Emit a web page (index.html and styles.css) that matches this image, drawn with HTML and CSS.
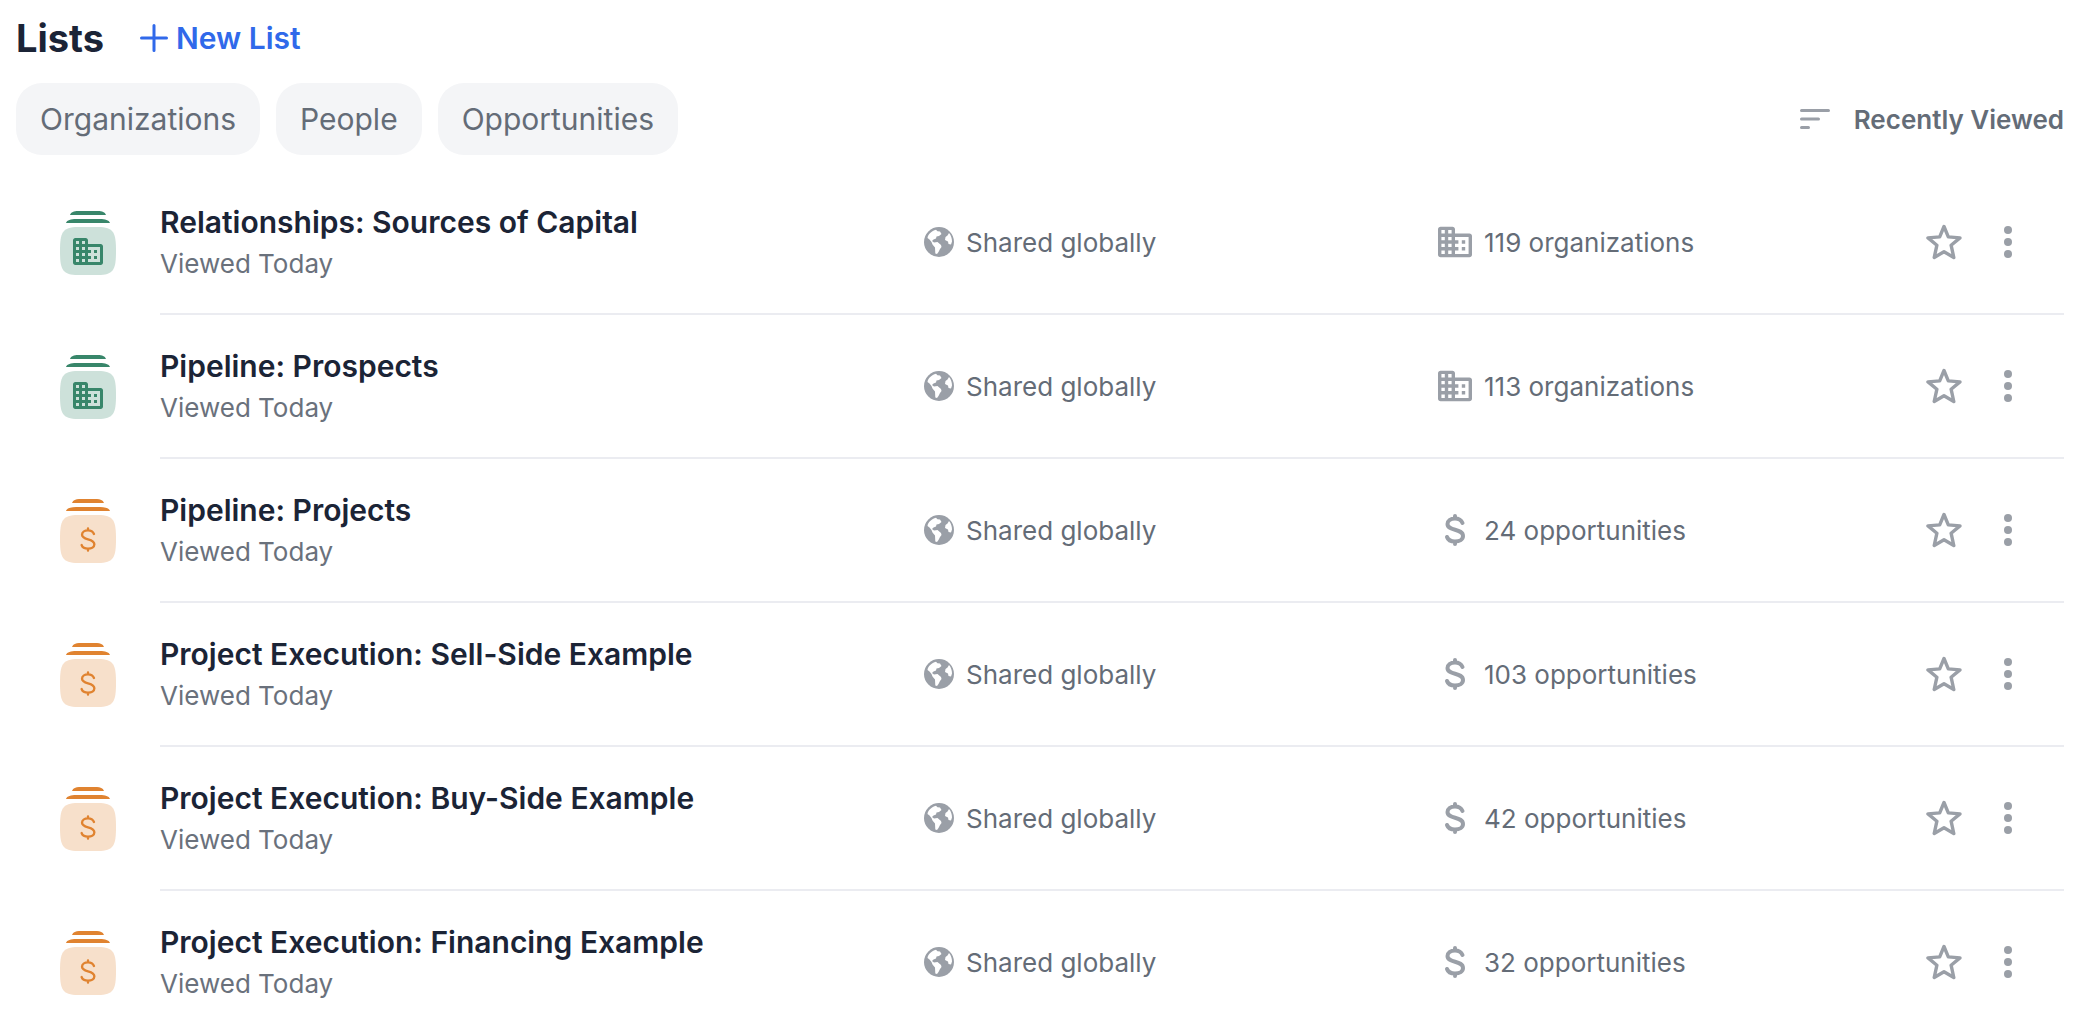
FILE: index.html
```html
<!DOCTYPE html>
<html lang="en">
<head>
<meta charset="utf-8">
<title>Lists</title>
<link rel="stylesheet" href="styles.css">
</head>
<body>
<svg class="sprite" aria-hidden="true">
  <symbol id="building" viewBox="2 3 20 18"><path fill-rule="evenodd" d="M12 7V4.500c0-.8-.7-1.500-1.500-1.500h-7C2.700 3 2 3.700 2 4.500v15c0 .8.7 1.500 1.500 1.500h17c.8 0 1.500-.7 1.500-1.500v-11c0-.8-.7-1.500-1.500-1.500zM6 19H4v-2h2zm0-4H4v-2h2zm0-4H4V9h2zm0-4H4V5h2zm4 12H8v-2h2zm0-4H8v-2h2zm0-4H8V9h2zm0-4H8V5h2zm10 12h-8v-2h2v-2h-2v-2h2v-2h-2V9h8zm-2-8h-2v2h2zm0 4h-2v2h2z"/></symbol>
  <symbol id="globe" viewBox="0 0 30 30"><circle cx="15" cy="15" r="15"/><path fill="#fff" d="M3.500 11C4 7 7.500 4 12 2.700l1.500 1.500 2.500.3 1.500 2.500-2.500 2-2.500.5-.5 2-2.500 1-1.500 1.500 2 1.500 3.500-.5 3.500 3 .5 2-1.500 2-1.500 3-1.500 2-1.700-.5-.3-6-2.500-3-1-2.500-2-2.500z"/><path fill="#fff" d="M25 6c2 2 3 5.500 3 8.500l-1 3-2.500-.5-.5-2.500-3-1.500.5-3 2-1.500z"/></symbol>
  <symbol id="dollar" viewBox="0 0 20 34"><path fill="none" stroke="currentColor" stroke-linecap="round" stroke-linejoin="round" d="M10 3V5.500M10 28.500v2.500M17.500 10C16 6.500 13 5.500 10 5.500c-4.500 0-7.500 2.300-7.500 5.500 0 7.500 15.500 4 15.500 12 0 3.500-3.500 5.500-8 5.500-4 0-7-1.500-8-4.500"/></symbol>
  <symbol id="star" viewBox="0 0 36 36"><path fill="none" stroke="currentColor" stroke-width="3.400" stroke-linejoin="round" d="M18 2.500l4.300 10.400 11.700 1-8.900 7.300 2.700 12.300L18 27.700l-9.800 5.800 2.700-12.300L2 13.900l11.700-1z"/></symbol>
  <symbol id="dots" viewBox="0 0 8 32"><circle cx="4" cy="4" r="4"/><circle cx="4" cy="16" r="4"/><circle cx="4" cy="28" r="4"/></symbol>
  <symbol id="stack-org" viewBox="0 0 56 64"><path d="M10 4c1-3 4-4 8-4h20c4 0 7 1 8 4zM6 12c1-3 5-4 10-4h24c5 0 9 1 10 4z"/><path opacity=".25" d="M0 40C0 22 2 16 18 16h20c16 0 18 6 18 24s-2 24-18 24H18C2 64 0 58 0 40z"/></symbol>
  <symbol id="stack-opp" viewBox="0 0 56 64"><path d="M12 4c1-3 4-4 7-4h18c3 0 6 1 7 4zM6 12c1-3 5-4 10-4h24c5 0 9 1 10 4z"/><path opacity=".25" d="M0 40C0 22 2 16 18 16h20c16 0 18 6 18 24s-2 24-18 24H18C2 64 0 58 0 40z"/></symbol>
</svg>

<main class="page">
  <header class="head">
    <h1 class="title">Lists</h1>
    <button class="new-list" type="button"><svg class="plus" viewBox="0 0 28 28" aria-hidden="true"><path d="M14 1.500v25M1.500 14h25"/></svg>New List</button>
  </header>

  <div class="toolbar">
    <div class="chips">
      <button class="chip" type="button">Organizations</button>
      <button class="chip" type="button">People</button>
      <button class="chip" type="button">Opportunities</button>
    </div>
    <button class="sort" type="button"><svg class="sort-icon" viewBox="0 0 30 20" aria-hidden="true"><path d="M1.500 1.500h27M1.500 10h17M1.500 18.500h7"/></svg>Recently Viewed</button>
  </div>

  <ul class="lists">
    <li class="row">
      <span class="badge org"><svg class="stack" aria-hidden="true"><use href="#stack-org"/></svg><svg class="glyph" aria-hidden="true"><use href="#building"/></svg></span>
      <div class="cells">
        <div><h2 class="name">Relationships: Sources of Capital</h2><p class="viewed">Viewed Today</p></div>
        <div class="meta"><svg class="globe" aria-hidden="true"><use href="#globe"/></svg>Shared globally</div>
        <div class="meta"><svg class="kind" aria-hidden="true"><use href="#building"/></svg>119 organizations</div>
        <div class="actions"><button class="act" type="button" aria-label="Favorite"><svg class="star"><use href="#star"/></svg></button><button class="act" type="button" aria-label="More"><svg class="dots"><use href="#dots"/></svg></button></div>
      </div>
    </li>
    <li class="row">
      <span class="badge org"><svg class="stack" aria-hidden="true"><use href="#stack-org"/></svg><svg class="glyph" aria-hidden="true"><use href="#building"/></svg></span>
      <div class="cells">
        <div><h2 class="name">Pipeline: Prospects</h2><p class="viewed">Viewed Today</p></div>
        <div class="meta"><svg class="globe" aria-hidden="true"><use href="#globe"/></svg>Shared globally</div>
        <div class="meta"><svg class="kind" aria-hidden="true"><use href="#building"/></svg>113 organizations</div>
        <div class="actions"><button class="act" type="button" aria-label="Favorite"><svg class="star"><use href="#star"/></svg></button><button class="act" type="button" aria-label="More"><svg class="dots"><use href="#dots"/></svg></button></div>
      </div>
    </li>
    <li class="row">
      <span class="badge opp"><svg class="stack" aria-hidden="true"><use href="#stack-opp"/></svg><svg class="glyph" aria-hidden="true"><use href="#dollar"/></svg></span>
      <div class="cells">
        <div><h2 class="name">Pipeline: Projects</h2><p class="viewed">Viewed Today</p></div>
        <div class="meta"><svg class="globe" aria-hidden="true"><use href="#globe"/></svg>Shared globally</div>
        <div class="meta"><svg class="kind" aria-hidden="true"><use href="#dollar"/></svg>24 opportunities</div>
        <div class="actions"><button class="act" type="button" aria-label="Favorite"><svg class="star"><use href="#star"/></svg></button><button class="act" type="button" aria-label="More"><svg class="dots"><use href="#dots"/></svg></button></div>
      </div>
    </li>
    <li class="row">
      <span class="badge opp"><svg class="stack" aria-hidden="true"><use href="#stack-opp"/></svg><svg class="glyph" aria-hidden="true"><use href="#dollar"/></svg></span>
      <div class="cells">
        <div><h2 class="name">Project Execution: Sell-Side Example</h2><p class="viewed">Viewed Today</p></div>
        <div class="meta"><svg class="globe" aria-hidden="true"><use href="#globe"/></svg>Shared globally</div>
        <div class="meta"><svg class="kind" aria-hidden="true"><use href="#dollar"/></svg>103 opportunities</div>
        <div class="actions"><button class="act" type="button" aria-label="Favorite"><svg class="star"><use href="#star"/></svg></button><button class="act" type="button" aria-label="More"><svg class="dots"><use href="#dots"/></svg></button></div>
      </div>
    </li>
    <li class="row">
      <span class="badge opp"><svg class="stack" aria-hidden="true"><use href="#stack-opp"/></svg><svg class="glyph" aria-hidden="true"><use href="#dollar"/></svg></span>
      <div class="cells">
        <div><h2 class="name">Project Execution: Buy-Side Example</h2><p class="viewed">Viewed Today</p></div>
        <div class="meta"><svg class="globe" aria-hidden="true"><use href="#globe"/></svg>Shared globally</div>
        <div class="meta"><svg class="kind" aria-hidden="true"><use href="#dollar"/></svg>42 opportunities</div>
        <div class="actions"><button class="act" type="button" aria-label="Favorite"><svg class="star"><use href="#star"/></svg></button><button class="act" type="button" aria-label="More"><svg class="dots"><use href="#dots"/></svg></button></div>
      </div>
    </li>
    <li class="row">
      <span class="badge opp"><svg class="stack" aria-hidden="true"><use href="#stack-opp"/></svg><svg class="glyph" aria-hidden="true"><use href="#dollar"/></svg></span>
      <div class="cells">
        <div><h2 class="name">Project Execution: Financing Example</h2><p class="viewed">Viewed Today</p></div>
        <div class="meta"><svg class="globe" aria-hidden="true"><use href="#globe"/></svg>Shared globally</div>
        <div class="meta"><svg class="kind" aria-hidden="true"><use href="#dollar"/></svg>32 opportunities</div>
        <div class="actions"><button class="act" type="button" aria-label="Favorite"><svg class="star"><use href="#star"/></svg></button><button class="act" type="button" aria-label="More"><svg class="dots"><use href="#dots"/></svg></button></div>
      </div>
    </li>
  </ul>
</main>
</body>
</html>
```
FILE: styles.css
```css
* { box-sizing: border-box; }
body {
  margin: 0;
  background: #fff;
  color: #1b2436;
  font-family: Inter, "Liberation Sans", sans-serif;
}
button {
  border: 0;
  padding: 0;
  background: none;
  font: inherit;
  color: inherit;
  cursor: pointer;
}
h1, h2, p, ul { margin: 0; padding: 0; }
svg { display: block; flex: none; fill: currentColor; }
.sprite { position: absolute; width: 0; height: 0; }

/* the list scrolls without a visible scrollbar */
html { scrollbar-width: none; }

.page { padding: 16px 22px 0 16px; }
.head { display: flex; align-items: center; gap: 36px; height: 44px; }
.title { font-size: 38px; line-height: 44px; font-weight: 700; }
.new-list {
  display: flex;
  align-items: center;
  gap: 8px;
  color: #3069ea;
  font-size: 30px;
  line-height: 44px;
  font-weight: 600;
}
.plus { width: 28px; height: 28px; stroke: currentColor; stroke-width: 3; stroke-linecap: round; }

.toolbar { display: flex; justify-content: space-between; align-items: center; margin-top: 23px; }
.chips { display: flex; gap: 16px; }
.chip {
  height: 72px;
  padding: 0 24px;
  border-radius: 26px;
  background: #f4f5f7;
  color: #646c77;
  font-size: 30px;
}
.sort { display: flex; align-items: center; gap: 24px; color: #646c77; font-size: 26px; font-weight: 600; }
.sort-icon { width: 30px; height: 20px; stroke: #9a9fa7; stroke-width: 3; stroke-linecap: round; }

.lists { margin-top: 16px; list-style: none; }
.row { display: flex; padding-left: 44px; }
.badge { display: grid; width: 56px; margin: 40px 44px 0 0; align-self: start; }
.stack, .glyph { grid-area: 1 / 1; }
.stack { width: 56px; height: 64px; }
.glyph { width: 30px; height: 27px; margin: 27px 0 0 13px; stroke-width: 3; }
.org { color: #38866a; }
.org .glyph { stroke: none; }
.opp { color: #e08330; }
.cells {
  flex: 1;
  display: grid;
  grid-template-columns: 764fr 514fr 488fr 138px;
  align-items: center;
  height: 144px;
  border-bottom: 2px solid #ebecf1;
}
.row:last-child .cells { border-bottom-color: transparent; }
.name { margin-bottom: 2px; font-size: 30px; line-height: 42px; font-weight: 600; }
.viewed { color: #6a717c; font-size: 26px; line-height: 38px; }
.meta { display: flex; align-items: center; gap: 12px; color: #646c77; font-size: 26px; }
.globe, .kind, .star, .dots { color: #9a9fa7; }
.globe { width: 30px; height: 30px; }
.kind { width: 34px; height: 34px; stroke-width: 4; }
.actions { display: flex; align-items: center; gap: 42px; }
.star { width: 36px; height: 36px; }
.dots { width: 8px; height: 32px; }
```
